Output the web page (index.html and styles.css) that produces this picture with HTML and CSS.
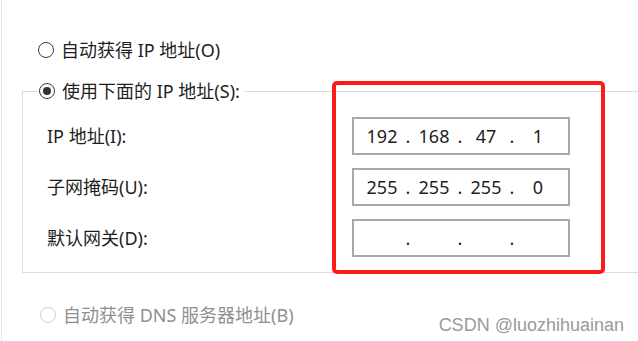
FILE: index.html
```html
<!DOCTYPE html>
<html lang="zh-CN">
<head>
<meta charset="utf-8">
<title>IP 设置</title>
<link rel="stylesheet" href="styles.css">
</head>
<body>
<div class="dialog">
  <div class="radio-row">
    <span class="radio"></span>
    <span class="radio-text">自动获得 IP 地址(O)</span>
  </div>

  <fieldset class="group">
    <legend class="radio-row legend">
      <span class="radio checked"></span>
      <span class="radio-text">使用下面的 IP 地址(S):</span>
    </legend>
    <div class="fields">
      <span class="label">IP 地址(I):</span>
      <div class="ip">
        <span class="oct">192</span><span class="dot">.</span><span class="oct">168</span><span class="dot">.</span><span class="oct">47</span><span class="dot">.</span><span class="oct">1</span>
      </div>

      <span class="label">子网掩码(U):</span>
      <div class="ip">
        <span class="oct">255</span><span class="dot">.</span><span class="oct">255</span><span class="dot">.</span><span class="oct">255</span><span class="dot">.</span><span class="oct">0</span>
      </div>

      <span class="label">默认网关(D):</span>
      <div class="ip">
        <span class="oct"></span><span class="dot">.</span><span class="oct"></span><span class="dot">.</span><span class="oct"></span><span class="dot">.</span><span class="oct"></span>
      </div>
    </div>
  </fieldset>

  <div class="radio-row disabled">
    <span class="radio"></span>
    <span class="radio-text">自动获得 DNS 服务器地址(B)</span>
  </div>

  <div class="highlight"></div>
  <div class="watermark">CSDN @luozhihuainan</div>
</div>
</body>
</html>
```

FILE: styles.css
```css
html, body {
  margin: 0;
  padding: 0;
  background: #ffffff;
}

body {
  width: 638px;
  height: 341px;
  overflow: hidden;
  font-family: "Noto Sans", "Noto Sans CJK SC", sans-serif;
  font-size: 18px;
  color: #1e1e1e;
}

.dialog {
  position: relative;
  margin-left: 1px;
  border-left: 1px solid #e6e6e6;
  height: 341px;
  box-sizing: border-box;
  padding-top: 38px;
}

.radio-row {
  display: flex;
  align-items: center;
  height: 24px;
  padding-left: 36px;
  line-height: 24px;
  white-space: nowrap;
}

.radio {
  width: 16px;
  height: 16px;
  box-sizing: border-box;
  border: 1.8px solid #3a3a3a;
  border-radius: 50%;
  margin-right: 7px;
  flex: none;
  display: flex;
  align-items: center;
  justify-content: center;
  background: #fff;
}

.radio.checked::after {
  content: "";
  width: 8px;
  height: 8px;
  border-radius: 50%;
  background: #333333;
}

.group {
  margin: 17px 0 0 20px;
  padding: 0 0 15px 15px;
  border: 1px solid #dcdcdc;
  border-right: none;
  min-width: 0;
}

.group .legend {
  padding: 0 4px 0 1px;
}

.fields {
  display: grid;
  grid-template-columns: 305px 218px;
  row-gap: 13px;
  align-items: center;
  margin-top: 14px;
  padding-left: 9px;
}

.label {
  line-height: 24px;
  white-space: nowrap;
}

.ip {
  display: flex;
  align-items: center;
  height: 38px;
  box-sizing: border-box;
  border: 2px solid #a8a8a8;
  padding-left: 5px;
  background: #fff;
}

.oct {
  width: 46px;
  text-align: center;
}

.dot {
  width: 6px;
  text-align: center;
}

.disabled {
  margin-top: 30px;
  padding-left: 38px;
  color: #8f8f8f;
}

.disabled .radio {
  border-color: #d0d0d0;
}

.highlight {
  position: absolute;
  left: 330px;
  top: 81px;
  width: 273px;
  height: 193px;
  box-sizing: border-box;
  border: 4px solid #fa1c16;
  border-radius: 5px;
}

.watermark {
  position: absolute;
  right: 14px;
  top: 315px;
  font-family: "Liberation Sans", Arial, sans-serif;
  font-size: 18px;
  line-height: 20px;
  color: #9a9a9a;
  white-space: nowrap;
}
```
